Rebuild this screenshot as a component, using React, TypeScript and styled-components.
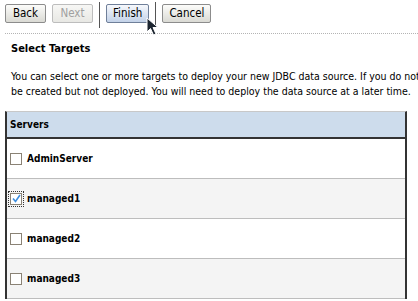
import React from 'react'
import styled, { createGlobalStyle } from 'styled-components'

const GlobalStyle = createGlobalStyle`
  html, body {
    margin: 0;
    padding: 0;
    background: #fff;
  }
  body {
    font-family: "DejaVu Sans Condensed", "DejaVu Sans", Verdana, sans-serif;
    font-size: 10px;
    color: #000;
    overflow: hidden;
  }
`

const servers = [
  { name: 'AdminServer', checked: false },
  { name: 'managed1', checked: true, focused: true },
  { name: 'managed2', checked: false },
  { name: 'managed3', checked: false },
]

const Page = styled.div`
  position: relative;
  width: 418px;
  height: 301px;
  overflow: hidden;
`

const Toolbar = styled.div`
  display: flex;
  align-items: flex-start;
  gap: 6px;
  padding: 2px 5px 0;
  height: 26px;
`

const WizardButton = styled.button<{ $primary?: boolean }>`
  margin-top: 2px;
  min-width: 41px;
  height: 19px;
  padding: 0 6px;
  font-family: "DejaVu Sans Condensed", "DejaVu Sans", Verdana, sans-serif;
  font-size: 11.5px;
  line-height: 17px;
  color: ${({ disabled }) => (disabled ? '#a0a0a0' : '#000')};
  border: 1px solid ${({ disabled, $primary }) => (disabled ? '#bdbdbd' : $primary ? '#6f7f99' : '#8c8c8c')};
  border-radius: 2px;
  background: ${({ $primary, disabled }) =>
    $primary
      ? 'linear-gradient(#f6f8fc, #c3d2e8)'
      : disabled
        ? 'linear-gradient(#f7f7f5, #e8e8e4)'
        : 'linear-gradient(#fcfcfa, #dadad4)'};
  cursor: default;
`

const Divider = styled.div`
  width: 1px;
  height: 26px;
  background: #555;
`

const DottedRule = styled.div`
  margin: 5px 0 0 5px;
  border-top: 1px dotted #b4b4b4;
`

const Content = styled.div`
  padding: 0 11px;
`

const Title = styled.h2`
  margin: 8px 0 0;
  font-size: 11px;
  font-weight: bold;
`

const Paragraph = styled.p`
  margin: 14px 0 0;
  font-size: 10.5px;
  line-height: 15px;
  white-space: nowrap;
`

const Table = styled.div`
  margin: 12px 0 0 5px;
  width: 398px;
  border-left: 2px solid #333;
  border-right: 2px solid #333;
  border-top: 1px solid #c8c8c8;
`

const Header = styled.div`
  height: 25px;
  display: flex;
  align-items: center;
  padding-left: 3px;
  background: #cddcec;
  border-bottom: 2px solid #333;
  font-size: 10px;
  font-weight: bold;
`

const Row = styled.div<{ $alt?: boolean }>`
  height: 39px;
  display: flex;
  align-items: center;
  gap: 4px;
  padding-left: 2px;
  background: ${({ $alt }) => ($alt ? '#f4f4f4' : '#fff')};
  border-bottom: 1px solid #bdbdbd;
  font-weight: bold;
  font-size: 10px;
`

const CheckWrap = styled.span<{ $focused?: boolean }>`
  display: flex;
  padding: 1px;
  outline: ${({ $focused }) => ($focused ? '1px dotted #333' : 'none')};
`

const Box = styled.span`
  width: 10px;
  height: 10px;
  border: 1px solid #8a8275;
  background: #fff;
  display: flex;
  align-items: center;
  justify-content: center;
`

const Cursor = styled.svg`
  position: absolute;
  left: 146px;
  top: 17px;
`

const CheckBox = ({ checked, focused }: { checked: boolean; focused?: boolean }) => (
  <CheckWrap $focused={focused}>
    <Box>
      {checked && (
        <svg width="9" height="9" viewBox="0 0 9 9">
          <path d="M1 4.5 L3.5 7.5 L8 1" fill="none" stroke="#3d8ee0" strokeWidth="1.6" />
        </svg>
      )}
    </Box>
  </CheckWrap>
)

const App = () => {
  return (
    <Page>
      <GlobalStyle />
      <Toolbar>
        <WizardButton>Back</WizardButton>
        <WizardButton disabled>Next</WizardButton>
        <Divider />
        <WizardButton $primary>Finish</WizardButton>
        <Divider />
        <WizardButton>Cancel</WizardButton>
      </Toolbar>
      <DottedRule />

      <Content>
        <Title>Select Targets</Title>
        <Paragraph>
          You can select one or more targets to deploy your new JDBC data source. If you do not select a target, the data source will
          <br />
          be created but not deployed. You will need to deploy the data source at a later time.
        </Paragraph>
      </Content>

      <Table>
        <Header>Servers</Header>
        {servers.map((server, i) => (
          <Row key={server.name} $alt={i % 2 === 1}>
            <CheckBox checked={server.checked} focused={server.focused} />
            {server.name}
          </Row>
        ))}
      </Table>

      <Cursor width="14" height="20" viewBox="0 0 14 20">
        <path d="M1 1 L1 15 L4.5 11.5 L7.5 18 L10 17 L7 10.5 L12 10.5 Z" fill="#1c2530" stroke="#fff" strokeWidth="1" />
      </Cursor>
    </Page>
  )
}

export default App
